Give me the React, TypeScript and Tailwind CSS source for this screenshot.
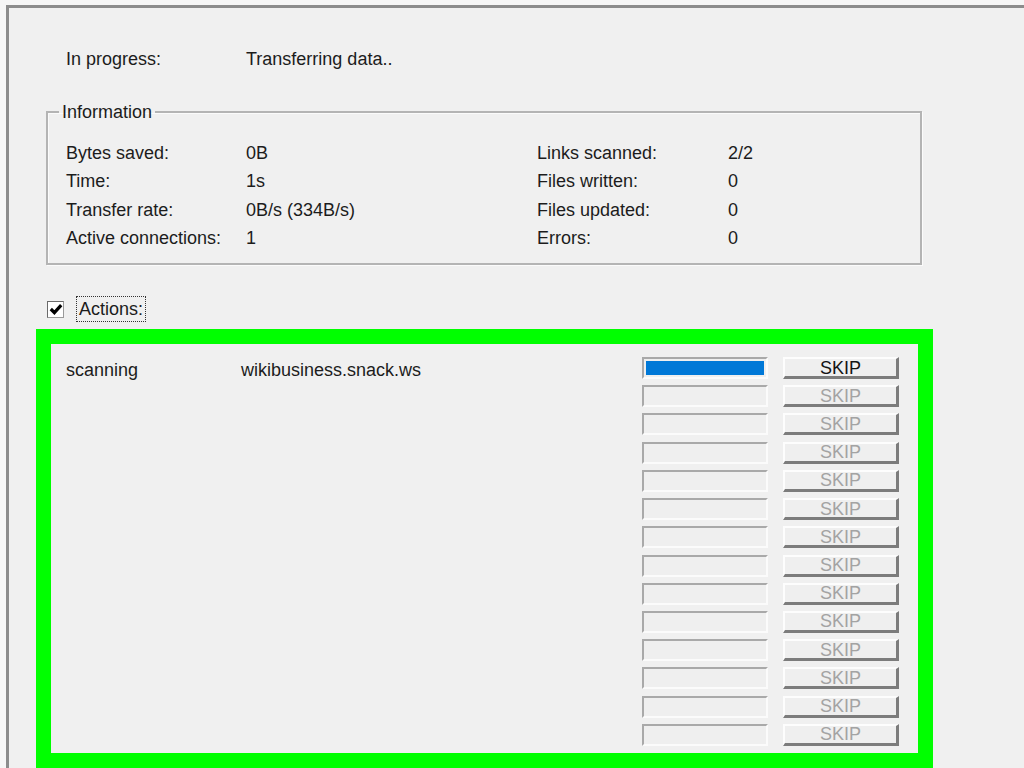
const leftInfo = [
  { label: "Bytes saved:", value: "0B" },
  { label: "Time:", value: "1s" },
  { label: "Transfer rate:", value: "0B/s (334B/s)" },
  { label: "Active connections:", value: "1" },
];

const rightInfo = [
  { label: "Links scanned:", value: "2/2" },
  { label: "Files written:", value: "0" },
  { label: "Files updated:", value: "0" },
  { label: "Errors:", value: "0" },
];

const slots = Array.from({ length: 14 }, (_, i) => i);

function ProgressBar({ value }: { value: number }) {
  return (
    <div className="h-[22px] w-[126px] border-t-2 border-l-2 border-b-2 border-r-2 border-t-[#a9a9a9] border-l-[#a9a9a9] border-b-[#fbfbfb] border-r-[#fbfbfb] bg-[#efefef] p-[2px]">
      <div className="h-full bg-[#0078d7]" style={{ width: `${value}%` }} />
    </div>
  );
}

function SkipButton({ enabled }: { enabled: boolean }) {
  return (
    <button
      className={[
        "flex h-[22px] w-[116px] items-center justify-center border-t-2 border-l-2 border-b-[3px] border-r-[3px] border-t-[#fdfdfd] border-l-[#fdfdfd] border-b-[#7c7c7c] border-r-[#7c7c7c] bg-[#efefef] text-[18px] leading-none",
        enabled ? "text-[#141414]" : "text-[#a3a3a3]",
      ].join(" ")}
    >
      SKIP
    </button>
  );
}

export default function App() {
  return (
    <div className="flex h-[768px] w-[1024px] flex-col overflow-hidden bg-[#f6f6f6] pl-[6px] pt-[5px] font-['Liberation_Sans',Arial,sans-serif] text-[18px] text-[#1c1c1c]">
      <div className="flex-1 border-l-[3px] border-t-[3px] border-[#8c8c8c] bg-[#f0f0f0]">
        {/* status line */}
        <div className="flex pl-[57px] pt-[39px] leading-[24px]">
          <span className="w-[180px]">In progress:</span>
          <span>Transferring data..</span>
        </div>

        {/* information group */}
        <fieldset className="ml-[37px] mt-[29px] h-[165px] w-[876px] border-2 border-[#b4b4b4] pb-[10px] pt-[15px] shadow-[inset_1px_1px_0_#fbfbfb,1px_1px_0_#fbfbfb]">
          <legend className="ml-[11px] px-[3px] leading-[24px]">Information</legend>
          <div className="grid grid-cols-[180px_291px_191px_1fr] pl-[18px] leading-[28.3px]">
            {leftInfo.map((row, i) => (
              <div key={row.label} className="contents">
                <span>{row.label}</span>
                <span>{row.value}</span>
                <span>{rightInfo[i].label}</span>
                <span>{rightInfo[i].value}</span>
              </div>
            ))}
          </div>
        </fieldset>

        {/* actions checkbox */}
        <div className="ml-[38px] mt-[31px] flex items-center gap-[12px]">
          <span className="flex h-[17px] w-[17px] items-center justify-center border border-t-[#6a6a6a] border-l-[#6a6a6a] border-b-[#9a9a9a] border-r-[#9a9a9a] bg-white">
            <svg viewBox="0 0 14 14" className="h-[14px] w-[14px]">
              <path d="M1.8 7 L5.4 10.6 L12.2 3.2" fill="none" stroke="#000" strokeWidth="3.2" />
            </svg>
          </span>
          <span className="border border-dotted border-[#333] px-[2px] leading-[24px]">Actions:</span>
        </div>

        {/* actions list */}
        <div className="ml-[27px] mt-[7px] flex h-[439px] w-[897px] border-[15px] border-[#00ff00] bg-[#f0f0f0]">
          <div className="flex flex-1 pl-[15px] pt-[14px] leading-[24px]">
            <span className="w-[175px]">scanning</span>
            <span>wikibusiness.snack.ws</span>
          </div>
          <div className="flex flex-col gap-[6.23px] pr-[19px] pt-[13px]">
            {slots.map((i) => (
              <div key={i} className="flex items-center gap-[15px]">
                <ProgressBar value={i === 0 ? 100 : 0} />
                <SkipButton enabled={i === 0} />
              </div>
            ))}
          </div>
        </div>
      </div>
    </div>
  );
}
